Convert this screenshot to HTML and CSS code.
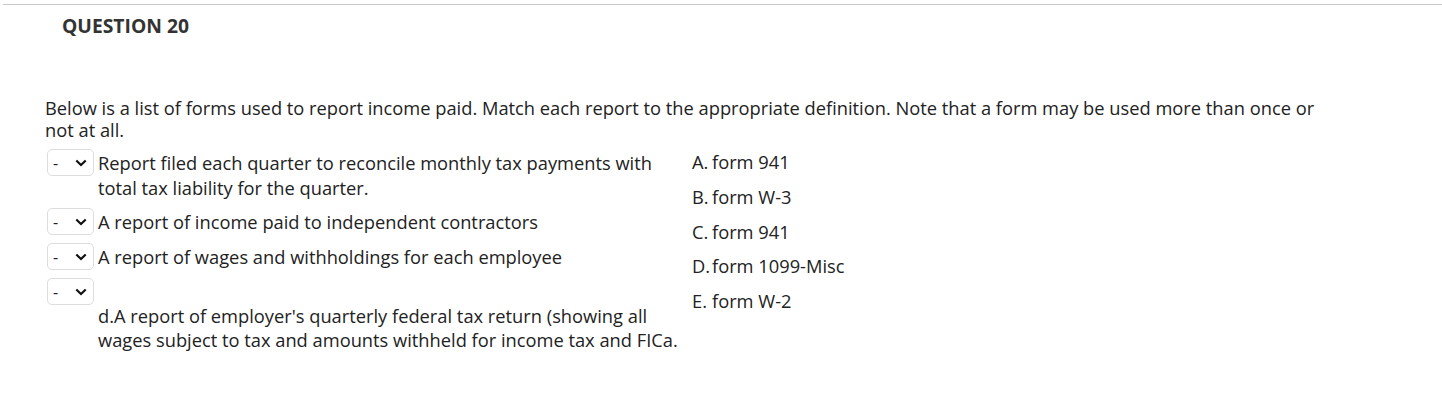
FILE: index.html
```html
<!DOCTYPE html>
<html lang="en">
<head>
<meta charset="utf-8">
<title>Question 20</title>
<link rel="stylesheet" href="styles.css">
</head>
<body>
<div class="topline"></div>
<h2 class="qtitle">QUESTION 20</h2>
<p class="prompt">Below is a list of forms used to report income paid. Match each report to the appropriate definition. Note that a form may be used more than once or not at all.</p>
<div class="match">
  <div class="items">
    <div class="item">
      <div class="pick"><span class="dash">-</span><svg class="chev" width="12" height="8" viewBox="0 0 12 8"><path d="M1.3 1.5l4.7 4.5 4.7-4.5" fill="none" stroke="#111" stroke-width="2.2"/></svg></div>
      <div class="itext">Report filed each quarter to reconcile monthly tax payments with total tax liability for the quarter.</div>
    </div>
    <div class="item">
      <div class="pick"><span class="dash">-</span><svg class="chev" width="12" height="8" viewBox="0 0 12 8"><path d="M1.3 1.5l4.7 4.5 4.7-4.5" fill="none" stroke="#111" stroke-width="2.2"/></svg></div>
      <div class="itext">A report of income paid to independent contractors</div>
    </div>
    <div class="item">
      <div class="pick"><span class="dash">-</span><svg class="chev" width="12" height="8" viewBox="0 0 12 8"><path d="M1.3 1.5l4.7 4.5 4.7-4.5" fill="none" stroke="#111" stroke-width="2.2"/></svg></div>
      <div class="itext">A report of wages and withholdings for each employee</div>
    </div>
    <div class="item">
      <div class="pick"><span class="dash">-</span><svg class="chev" width="12" height="8" viewBox="0 0 12 8"><path d="M1.3 1.5l4.7 4.5 4.7-4.5" fill="none" stroke="#111" stroke-width="2.2"/></svg></div>
      <div class="itext below">d.A report of employer's quarterly federal tax return (showing all wages subject to tax and amounts withheld for income tax and FICa.</div>
    </div>
  </div>
  <ol class="choices">
    <li><span class="letter">A.</span><span>form 941</span></li>
    <li><span class="letter">B.</span><span>form W-3</span></li>
    <li><span class="letter">C.</span><span>form 941</span></li>
    <li><span class="letter">D.</span><span>form 1099-Misc</span></li>
    <li><span class="letter">E.</span><span>form W-2</span></li>
  </ol>
</div>
</body>
</html>
```
FILE: styles.css
```css
html, body {
  margin: 0;
  padding: 0;
  background: #fff;
}
body {
  font-family: "Open Sans", "Noto Sans", sans-serif;
  font-size: 18.3px;
  color: #222;
}
.topline {
  height: 1px;
  background: #c9c9c9;
  margin: 4px 0 0 3px;
}
.qtitle {
  margin: 9px 0 0 62px;
  font-size: 19.3px;
  line-height: 24px;
  font-weight: 700;
  color: #333;
}
.prompt {
  margin: 59px 0 0 45px;
  width: 1290px;
  line-height: 22px;
}
.match {
  display: flex;
  margin: 8px 0 0 47px;
}
.items {
  width: 645px;
}
.item {
  display: flex;
  align-items: flex-start;
  gap: 4px;
  margin-bottom: 8px;
}
.pick {
  box-sizing: border-box;
  flex: 0 0 47px;
  height: 27px;
  border: 1px solid #ddd;
  border-radius: 5px;
  display: flex;
  align-items: center;
  justify-content: space-between;
  padding: 0 6px 0 5px;
  font-size: 16px;
}
.dash {
  line-height: 20px;
}
.chev {
  display: block;
  margin-top: 0;
}
.itext {
  width: 582px;
  padding-top: 1px;
  line-height: 25px;
}
.itext.below {
  padding-top: 26px;
  line-height: 24px;
}
.choices {
  list-style: none;
  margin: 1px 0 0 0;
  padding: 0;
  display: flex;
  flex-direction: column;
  gap: 10.75px;
}
.choices li {
  display: flex;
  line-height: 24px;
}
.letter {
  width: 20px;
}
```
